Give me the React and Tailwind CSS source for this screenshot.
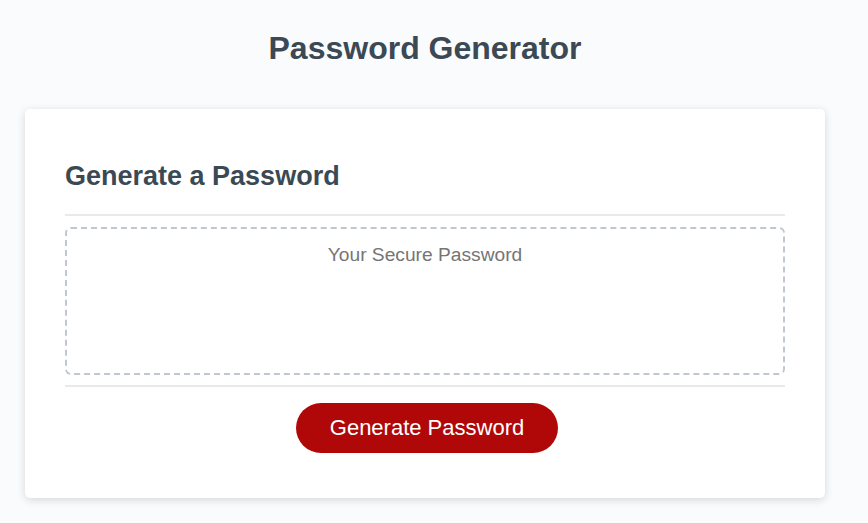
import React from "react";

function App() {
  return (
    <div className="min-h-[523px] w-full bg-[#f9fbfd] font-['Liberation_Sans',Arial,sans-serif] text-[#3b4954]">
      <div className="w-[850px] pt-[30px] pb-[25px]">
        <header className="text-center">
          <h1 className="text-[32px] font-bold leading-[37px]">Password Generator</h1>
        </header>

        <div className="mx-auto mt-[42px] w-[800px] rounded-[5px] bg-white px-10 pt-[30px] pb-[29px] text-[18px] shadow-[0_2px_8px_0_rgba(0,0,0,0.15)]">
          <div className="pt-[22px]">
            <h2 className="mb-[22px] text-[27px] font-bold leading-[31px]">Generate a Password</h2>
            <div className="h-[2px] w-full bg-[#e7e9eb]"></div>
          </div>

          <div className="min-h-[100px]">
            <textarea
              readOnly
              placeholder="Your Secure Password"
              aria-label="Generated Password"
              className="mt-[11px] mb-[10px] block h-[148px] w-full resize-none overflow-hidden rounded-[6px] border-2 border-dashed border-[#c0c7cf] px-[15px] pt-[15px] text-center text-[19.2px] leading-[22px] placeholder:text-[#757575] focus:outline-none"
            ></textarea>
          </div>

          <div className="text-center">
            <div className="h-[2px] w-full bg-[#e7e9eb]"></div>
            <button
              type="button"
              className="mt-4 mb-4 ml-5 mr-4 inline-block cursor-pointer rounded-[25px] bg-[#b00808] px-[34px] py-[14px] text-[22px] leading-[22px] text-white"
            >
              Generate Password
            </button>
          </div>
        </div>
      </div>
    </div>
  );
}

export default App;
